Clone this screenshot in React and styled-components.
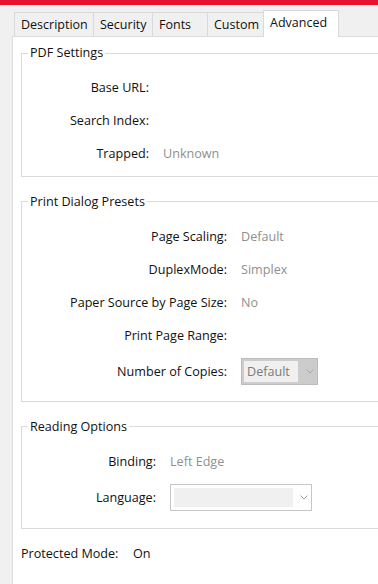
import React from "react";
import styled, { createGlobalStyle } from "styled-components";

const GlobalStyle = createGlobalStyle`
  html, body {
    margin: 0;
    padding: 0;
    height: 100%;
    overflow: hidden;
    background: #f0f0f0;
  }
  body {
    font-family: "Open Sans", "Noto Sans", "Liberation Sans", sans-serif;
    font-size: 12.6px;
    color: #111111;
  }
  #root { height: 100%; }
`;

const Page = styled.div`
  display: flex;
  flex-direction: column;
  height: 100%;
`;

const TopBar = styled.div`
  height: 5px;
  background: #e8112d;
  flex: none;
`;

const TabStrip = styled.div`
  display: flex;
  align-items: flex-end;
  padding: 5px 0 0 14px;
  margin-bottom: -1px;
  position: relative;
  z-index: 1;
  flex: none;
`;

const Tab = styled.div`
  box-sizing: border-box;
  width: ${(p) => p.$w}px;
  height: ${(p) => (p.$active ? 27 : 24)}px;
  margin-bottom: ${(p) => (p.$active ? 0 : 1)}px;
  margin-left: -1px;
  &:first-child { margin-left: 0; }
  border: 1px solid #d9d9d9;
  border-bottom: none;
  background: ${(p) => (p.$active ? "#ffffff" : "#f0f0f0")};
  padding: 3px 0 0 6px;
  line-height: 17px;
  font-size: 12.5px;
  color: #111111;
  white-space: nowrap;
`;

const Panel = styled.div`
  flex: 1;
  margin-left: 12px;
  background: #ffffff;
  border-left: 1px solid #dcdcdc;
  border-top: 1px solid #dcdcdc;
  padding: 7px 0 0 8px;
  overflow: hidden;
`;

const Group = styled.fieldset`
  margin: 0 -12px 16px 0;
  padding: 9px 0 ${(p) => p.$pb}px 0;
  border: 1px solid #dadada;
  min-width: 0;
`;

const Legend = styled.legend`
  margin-left: 6px;
  padding: 0 2px;
  line-height: 18px;
  color: #111111;
`;

const Row = styled.div`
  display: grid;
  grid-template-columns: ${(p) => p.$lw}px auto;
  column-gap: 14px;
  align-items: center;
  justify-content: start;
  min-height: ${(p) => p.$h || 33}px;
`;

const Label = styled.div`
  text-align: right;
  white-space: nowrap;
  color: #111111;
`;

const Value = styled.div`
  color: #8f8f8f;
  white-space: nowrap;
`;

const Select = styled.div`
  box-sizing: border-box;
  width: ${(p) => p.$w}px;
  height: 27px;
  border: 1px solid ${(p) => (p.$disabled ? "#bcbcbc" : "#c6c6c6")};
  background: ${(p) => (p.$disabled ? "#cccccc" : "#ffffff")};
  display: flex;
  align-items: center;
  padding: 0 0 0 ${(p) => (p.$disabled ? 2 : 3)}px;
  gap: ${(p) => (p.$disabled ? 8 : 7)}px;
`;

const SelectField = styled.div`
  box-sizing: border-box;
  width: ${(p) => p.$w}px;
  height: ${(p) => p.$h}px;
  background: #f0f0f0;
  color: #7a7a7a;
  padding-left: 3px;
  line-height: ${(p) => p.$h}px;
  white-space: nowrap;
`;

const Chevron = () => (
  <svg width="8" height="5" viewBox="0 0 8 5" aria-hidden="true">
    <polyline points="0.5,0.5 4,4 7.5,0.5" fill="none" stroke="#a6a6a6" strokeWidth="1" />
  </svg>
);

const FooterRow = styled.div`
  display: flex;
  line-height: 18px;
  color: #111111;
`;

const FooterLabel = styled.div`
  width: 112px;
  flex: none;
`;

const tabs = [
  { name: "Description", w: 80 },
  { name: "Security", w: 60 },
  { name: "Fonts", w: 56 },
  { name: "Custom", w: 57 },
  { name: "Advanced", w: 76, active: true },
];

export default function App() {
  return (
    <>
      <GlobalStyle />
      <Page>
        <TopBar />
        <TabStrip>
          {tabs.map((t) => (
            <Tab key={t.name} $w={t.w} $active={t.active}>
              {t.name}
            </Tab>
          ))}
        </TabStrip>
        <Panel>
          <Group $pb={5.5}>
            <Legend>PDF Settings</Legend>
            <Row $lw={127}>
              <Label>Base URL:</Label>
              <Value />
            </Row>
            <Row $lw={127}>
              <Label>Search Index:</Label>
              <Value />
            </Row>
            <Row $lw={127}>
              <Label>Trapped:</Label>
              <Value>Unknown</Value>
            </Row>
          </Group>

          <Group $pb={9}>
            <Legend>Print Dialog Presets</Legend>
            <Row $lw={205}>
              <Label>Page Scaling:</Label>
              <Value>Default</Value>
            </Row>
            <Row $lw={205}>
              <Label>DuplexMode:</Label>
              <Value>Simplex</Value>
            </Row>
            <Row $lw={205}>
              <Label>Paper Source by Page Size:</Label>
              <Value>No</Value>
            </Row>
            <Row $lw={205}>
              <Label>Print Page Range:</Label>
              <Value />
            </Row>
            <Row $lw={205} $h={40}>
              <Label>Number of Copies:</Label>
              <Select $w={77} $disabled>
                <SelectField $w={54} $h={21}>Default</SelectField>
                <Chevron />
              </Select>
            </Row>
          </Group>

          <Group $pb={10}>
            <Legend>Reading Options</Legend>
            <Row $lw={134}>
              <Label>Binding:</Label>
              <Value>Left Edge</Value>
            </Row>
            <Row $lw={134} $h={40}>
              <Label>Language:</Label>
              <Select $w={142}>
                <SelectField $w={119} $h={19} />
                <Chevron />
              </Select>
            </Row>
          </Group>

          <FooterRow>
            <FooterLabel>Protected Mode:</FooterLabel>
            <div>On</div>
          </FooterRow>
        </Panel>
      </Page>
    </>
  );
}
